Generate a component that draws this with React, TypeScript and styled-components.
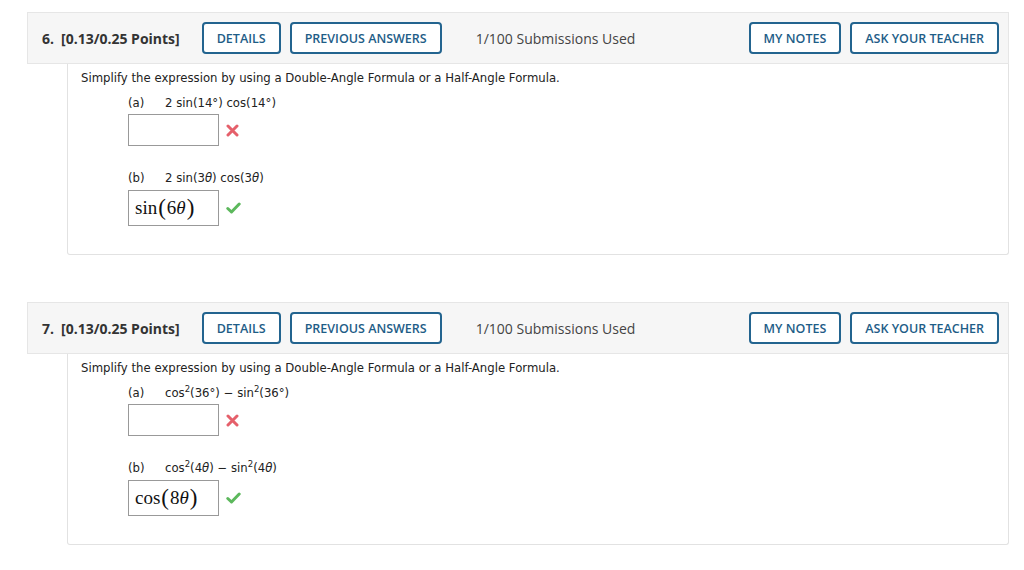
import { ReactNode } from 'react';
import styled, { createGlobalStyle } from 'styled-components';

const GlobalStyle = createGlobalStyle`
  html, body {
    margin: 0;
    padding: 0;
    background: #ffffff;
  }

  body {
    font-family: 'Open Sans', 'Liberation Sans', sans-serif;
    color: #333333;
  }
`;

const Page = styled.div`
  width: 982px;
  padding: 12px 0 0 27px;

  display: flex;
  flex-direction: column;
  gap: 47px;
`;

const Block = styled.div`
  display: flex;
  flex-direction: column;
`;

const Header = styled.div`
  height: 50px;
  padding: 0 9px 0 14px;

  background: #f6f6f6;
  border: 1px solid #e6e6e6;

  display: flex;
  align-items: center;
`;

const Number = styled.span`
  font-size: 14px;
  font-weight: 700;
  color: #333333;
  margin-right: 7px;
`;

const Points = styled.span`
  font-size: 14px;
  font-weight: 700;
  color: #333333;
  margin-right: 22px;
`;

const Button = styled.button`
  height: 32px;
  padding: 0 13px;
  margin-right: 9px;

  background: #ffffff;
  border: 2px solid #23648f;
  border-radius: 4px;

  font-family: 'Open Sans', 'Liberation Sans', sans-serif;
  font-size: 12.5px;
  font-weight: 600;
  text-transform: uppercase;
  color: #1e5d87;

  &:last-child {
    margin-right: 0;
  }
`;

const Submissions = styled.span`
  margin-left: 25px;
  font-size: 14px;
  color: #444444;
`;

const Spacer = styled.div`
  flex: 1;
`;

const Body = styled.div`
  margin-left: 40px;
  padding: 7px 13px 28px;

  border: 1px solid #e2e2e2;
  border-top: none;
  border-radius: 0 0 3px 3px;

  font-family: Verdana, 'DejaVu Sans', sans-serif;
  font-size: 11.7px;
  color: #222222;
`;

const Prompt = styled.div`
  line-height: 14px;
`;

const PartBlock = styled.div<{ $first: boolean }>`
  margin-top: ${(props) => (props.$first ? '11px' : '25px')};
  padding-left: 47px;
`;

const PartRow = styled.div`
  line-height: 14px;
  display: flex;

  sup {
    font-size: 8.5px;
    line-height: 0;
  }
`;

const PartLabel = styled.span`
  width: 37px;
`;

const AnswerRow = styled.div`
  margin-top: 4px;
  display: flex;
  align-items: center;
`;

const AnswerBox = styled.div<{ $filled: boolean }>`
  width: 83px;
  height: ${(props) => (props.$filled ? '34px' : '30px')};
  margin-top: ${(props) => (props.$filled ? '1px' : '0')};
  padding-left: 6px;

  border: 1px solid #999999;
  background: #ffffff;

  display: flex;
  align-items: center;

  font-family: 'Liberation Serif', 'DejaVu Serif', serif;
  font-size: 19px;
  color: #111111;

  i {
    font-style: italic;
  }
`;

const Paren = styled.span`
  font-size: 23px;
  margin: 0 1px;
`;

const Mark = styled.span`
  margin-left: 7px;
  display: flex;
  align-items: center;
`;

interface Part {
  label: string;
  expression: ReactNode;
  answer?: ReactNode;
  correct: boolean;
}

interface QuestionData {
  number: number;
  points: string;
  parts: Part[];
}

const Theta = () => <i>θ</i>;

const QUESTIONS: QuestionData[] = [
  {
    number: 6,
    points: '[0.13/0.25 Points]',
    parts: [
      { label: '(a)', expression: <>2 sin(14°) cos(14°)</>, correct: false },
      {
        label: '(b)',
        expression: (
          <>
            2 sin(3<Theta />) cos(3<Theta />)
          </>
        ),
        answer: (
          <>
            sin<Paren>(</Paren>6<Theta /><Paren>)</Paren>
          </>
        ),
        correct: true,
      },
    ],
  },
  {
    number: 7,
    points: '[0.13/0.25 Points]',
    parts: [
      {
        label: '(a)',
        expression: (
          <>
            cos<sup>2</sup>(36°) − sin<sup>2</sup>(36°)
          </>
        ),
        correct: false,
      },
      {
        label: '(b)',
        expression: (
          <>
            cos<sup>2</sup>(4<Theta />) − sin<sup>2</sup>(4<Theta />)
          </>
        ),
        answer: (
          <>
            cos<Paren>(</Paren>8<Theta /><Paren>)</Paren>
          </>
        ),
        correct: true,
      },
    ],
  },
];

const WrongIcon = () => (
  <svg width="13" height="13" viewBox="0 0 13 13">
    <path d="M2 2 L11 11 M11 2 L2 11" stroke="#e5606b" strokeWidth="3" strokeLinecap="round" />
  </svg>
);

const RightIcon = () => (
  <svg width="15" height="12" viewBox="0 0 15 12">
    <path d="M1.8 6.5 L5.5 10 L13.2 2" stroke="#5cb85c" strokeWidth="3" fill="none" strokeLinecap="round" strokeLinejoin="round" />
  </svg>
);

const Question = ({ data }: { data: QuestionData }) => (
  <Block>
    <Header>
      <Number>{data.number}.</Number>
      <Points>{data.points}</Points>
      <Button>Details</Button>
      <Button>Previous Answers</Button>
      <Submissions>1/100 Submissions Used</Submissions>
      <Spacer />
      <Button>My Notes</Button>
      <Button>Ask Your Teacher</Button>
    </Header>
    <Body>
      <Prompt>Simplify the expression by using a Double-Angle Formula or a Half-Angle Formula.</Prompt>
      {data.parts.map((part, i) => (
        <PartBlock key={part.label} $first={i === 0}>
          <PartRow>
            <PartLabel>{part.label}</PartLabel>
            <span>{part.expression}</span>
          </PartRow>
          <AnswerRow>
            <AnswerBox $filled={!!part.answer}>{part.answer}</AnswerBox>
            <Mark>{part.correct ? <RightIcon /> : <WrongIcon />}</Mark>
          </AnswerRow>
        </PartBlock>
      ))}
    </Body>
  </Block>
);

const App = () => (
  <>
    <GlobalStyle />
    <Page>
      {QUESTIONS.map((q) => (
        <Question key={q.number} data={q} />
      ))}
    </Page>
  </>
);

export default App;
